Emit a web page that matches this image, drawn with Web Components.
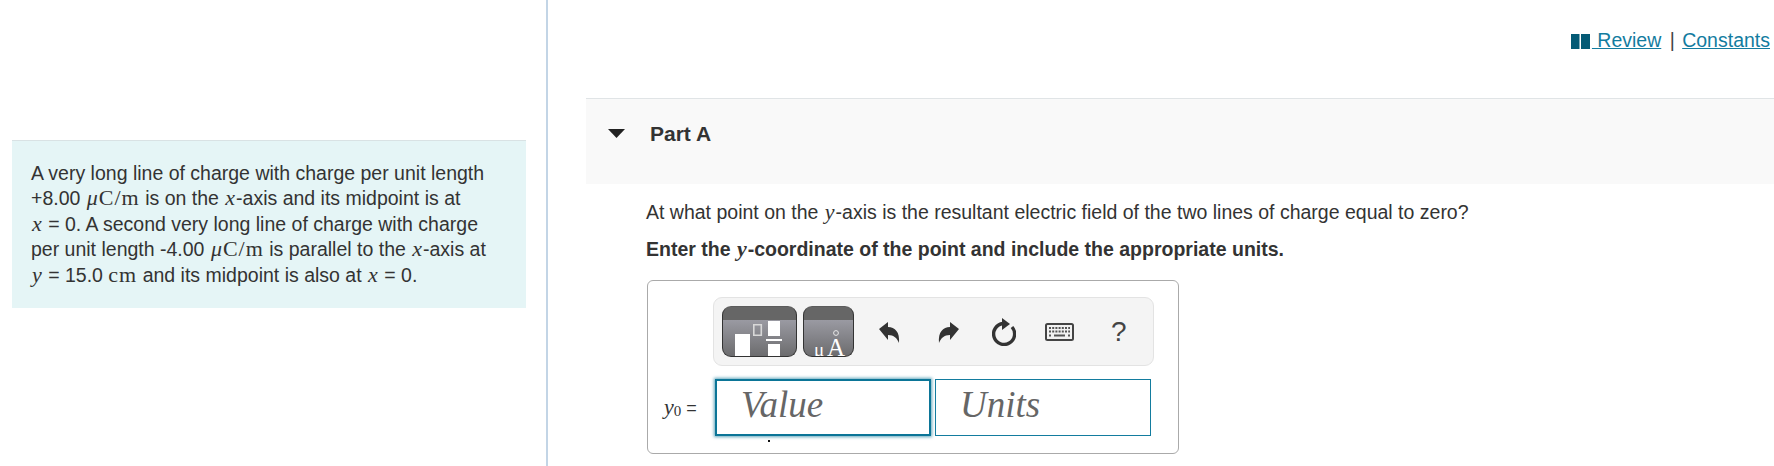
<!DOCTYPE html>
<html>
<head>
<meta charset="utf-8">
<style>
  html, body { margin: 0; padding: 0; background: #fff; }
  body { font: 19.5px/25.4px "Liberation Sans", Arial, sans-serif; color: #333; height: 466px; overflow: hidden; }
  i.m { font-family: "Liberation Serif", serif; font-style: italic; font-size: 22px; line-height: 1; padding: 0 1px; }
  span.r { font-family: "Liberation Serif", serif; font-size: 22px; line-height: 1; letter-spacing: 1px; }
</style>
</head>
<body>
<mp-page>
  <mp-intro slot="left">A very long line of charge with charge per unit length<br>+8.00 <i class="m">μ</i><span class="r">C/m</span> is on the <i class="m">x</i>-axis and its midpoint is at<br><i class="m">x</i> = 0. A second very long line of charge with charge<br>per unit length -4.00 <i class="m">μ</i><span class="r">C/m</span> is parallel to the <i class="m">x</i>-axis at<br><i class="m">y</i> = 15.0 <span class="r">cm</span> and its midpoint is also at <i class="m">x</i> = 0.</mp-intro>
  <mp-review-links slot="right"></mp-review-links>
  <mp-part-header slot="right">Part A</mp-part-header>
  <mp-part-body slot="right">
    <p>At what point on the <i class="m">y</i>-axis is the resultant electric field of the two lines of charge equal to zero?</p>
    <p><b>Enter the <i class="m">y</i>-coordinate of the point and include the appropriate units.</b></p>
  </mp-part-body>
  <mp-answer-box slot="right"></mp-answer-box>
</mp-page>

<script>
class MpPage extends HTMLElement {
  constructor() {
    super()
    this.attachShadow({ mode: 'open' }).innerHTML = `
    <style>
      :host { display: grid; grid-template-columns: 548px 1fr; height: 466px; }
      .left { box-sizing: border-box; border-right: 2px solid #c3d5e6; padding: 140px 0 0 12px; }
      .right { padding-left: 38px; min-width: 0; }
    </style>
    <div class="left"><slot name="left"></slot></div>
    <div class="right"><slot name="right"></slot></div>`
  }
}

class MpIntro extends HTMLElement {
  constructor() {
    super()
    this.attachShadow({ mode: 'open' }).innerHTML = `
    <style>
      :host { display: block; box-sizing: border-box; width: 514px; height: 168px; background: #e5f5f6; border-top: 1px solid #d9e2e4; padding: 20px 0 0 19px; white-space: nowrap; }
    </style>
    <slot></slot>`
  }
}

class MpReviewLinks extends HTMLElement {
  constructor() {
    super()
    this.attachShadow({ mode: 'open' }).innerHTML = `
    <style>
      :host { display: flex; justify-content: flex-end; align-items: center; height: 98px; box-sizing: border-box; padding: 0 4px 16px 0; color: #444; white-space: pre; }
      a { color: #137c9f; text-decoration: underline; }
      svg { margin-right: 2px; }
      .sep { margin: 0 2px 0 3px; }
    </style>
    <svg width="19" height="15" viewBox="0 0 19 15"><path fill="#045a75" d="M0 0h8.500v15H0zM10 0h9v15h-9z"/></svg>
    <a href="#"> Review</a><span class="sep"> | </span><a href="#">Constants</a>`
  }
}

class MpPartHeader extends HTMLElement {
  constructor() {
    super()
    this.attachShadow({ mode: 'open' }).innerHTML = `
    <style>
      :host { display: flex; align-items: flex-start; box-sizing: border-box; height: 86px; background: #f9f9f9; border-top: 1px solid #e0e4e6; padding: 22px 0 0 22px; font-weight: bold; font-size: 21px; color: #333; }
      svg { margin: 8px 25px 0 0; }
    </style>
    <svg width="17" height="9" viewBox="0 0 17 9"><path fill="#222" d="M0 0h17L8.500 9z"/></svg>
    <span><slot></slot></span>`
  }
}

class MpPartBody extends HTMLElement {
  constructor() {
    super()
    this.attachShadow({ mode: 'open' }).innerHTML = `
    <style>
      :host { display: block; padding: 16px 0 0 60px; height: 96px; box-sizing: border-box; }
      ::slotted(p) { margin: 0 0 12px; }
    </style>
    <slot></slot>`
  }
}

class MpToolButton extends HTMLElement {
  constructor() {
    super()
    this.attachShadow({ mode: 'open' }).innerHTML = `
    <style>
      :host { display: block; flex: none; box-sizing: border-box; height: 51px; border-radius: 9px; overflow: hidden; border: 1px solid #333; border-top-color: #5c5c5c; background: linear-gradient(#666 0 13px, #9a9aa2 13px, #6c6c6e 100%); }
      ::slotted(svg) { display: block; width: 100%; height: 100%; }
    </style>
    <slot></slot>`
  }
}

class MpToolbar extends HTMLElement {
  constructor() {
    super()
    this.attachShadow({ mode: 'open' }).innerHTML = `
    <style>
      :host { display: flex; align-items: center; box-sizing: border-box; height: 69px; width: 441px; background: #f4f4f4; border: 1px solid #e3e3e3; border-radius: 9px; padding: 0 0 0 8px; }
      .t1 { width: 75px; margin-right: 6px; }
      .t2 { width: 51px; margin-right: 25px; }
      svg.i { flex: none; display: block; }
      .q { font-size: 28px; line-height: 28px; color: #444; margin-left: 37px; }
      .g38 { margin-left: 38px; } .g33 { margin-left: 33px; } .g29 { margin-left: 29px; }
      text { font-family: "Liberation Serif", serif; fill: #fff; }
    </style>
    <mp-tool-button class="t1">
      <svg viewBox="0 0 73 49"><path fill="#fff" d="M12 27h15v22H12zM45 14h12v15H45zM45 37h12v12H45zM43 32h16v2H43z"/><path fill="none" stroke="#d8d8d8" stroke-width="1.600" d="M30.800 17.800h7.500v10.500h-7.500z"/></svg>
    </mp-tool-button>
    <mp-tool-button class="t2">
      <svg viewBox="0 0 49 49"><text x="10" y="49" font-size="19">μ</text><text x="32" y="49" font-size="25" text-anchor="middle">A</text><circle cx="32" cy="26" r="2.400" fill="none" stroke="#e8e8e8" stroke-width="1"/></svg>
    </mp-tool-button>
    <svg class="i" width="21" height="22" viewBox="0 0 21 22"><path fill="#333" d="M0 8 9 1v5c7 0 12 5 11 16-2-5-5-8-11-8v5z"/></svg>
    <svg class="i g38" width="21" height="22" viewBox="0 0 21 22"><path fill="#333" d="M21 8 12 1v5C5 6 0 11 1 22c2-5 5-8 11-8v5z"/></svg>
    <svg class="i g33" width="24" height="28" viewBox="0 0 24 28"><path fill="none" stroke="#333" stroke-width="3.400" d="M11 5.500A10.500 10.500 0 1 0 20 9"/><path fill="#333" d="M10 0l8 6-8 6z"/></svg>
    <svg class="i g29" width="29" height="18" viewBox="0 0 29 18"><rect x="1" y="1" width="27" height="16" rx="1.500" fill="#f2f2f2" stroke="#444" stroke-width="2"/><path stroke="#555" stroke-width="2" stroke-dasharray="2 1.200" fill="none" d="M4 5h21M4 8.500h21"/><path stroke="#555" stroke-width="2" fill="none" d="M4 12.500h2M9 12.500h11M23 12.500h2"/></svg>
    <span class="q">?</span>`
  }
}

class MpUnitField extends HTMLElement {
  constructor() {
    super()
    this.attachShadow({ mode: 'open' }).innerHTML = `
    <style>
      :host { display: block; box-sizing: border-box; flex: none; height: 57px; border: 1px solid #137c9f; padding-left: 24px; font: italic 37px/50px "Liberation Serif", serif; color: #666; }
      :host([focused]) { border-width: 2px; border-color: #0b7597; box-shadow: 0 0 3px 1px rgba(11,117,151,.65); padding-left: 24px; line-height: 48px; }
    </style>
    <slot></slot>`
  }
}

class MpAnswerBox extends HTMLElement {
  constructor() {
    super()
    this.attachShadow({ mode: 'open' }).innerHTML = `
    <style>
      :host { display: block; box-sizing: border-box; position: relative; width: 532px; height: 174px; margin-left: 61px; border: 1px solid #aaa; border-radius: 6px; padding: 16px 0 0 65px; }
      .row { display: flex; align-items: center; margin: 13px 0 0 -65px; }
      .label { width: 67px; flex: none; box-sizing: border-box; padding-left: 16px; font-size: 18px; white-space: nowrap; }
      .label i { font: italic 22px "Liberation Serif", serif; }
      .label sub { font: 15px "Liberation Serif", serif; vertical-align: -2px; }
      .v { width: 216px; margin-right: 4px; }
      .u { width: 216px; }
      .dot { position: absolute; left: 120px; top: 159px; width: 2px; height: 2px; background: #111; }
    </style>
    <mp-toolbar></mp-toolbar>
    <div class="row">
      <span class="label"><i>y</i><sub>0</sub> =</span>
      <mp-unit-field class="v" focused>Value</mp-unit-field>
      <mp-unit-field class="u">Units</mp-unit-field>
    </div>
    <div class="dot"></div>`
  }
}

customElements.define('mp-page', MpPage)
customElements.define('mp-intro', MpIntro)
customElements.define('mp-review-links', MpReviewLinks)
customElements.define('mp-part-header', MpPartHeader)
customElements.define('mp-part-body', MpPartBody)
customElements.define('mp-tool-button', MpToolButton)
customElements.define('mp-toolbar', MpToolbar)
customElements.define('mp-unit-field', MpUnitField)
customElements.define('mp-answer-box', MpAnswerBox)
</script>
</body>
</html>
